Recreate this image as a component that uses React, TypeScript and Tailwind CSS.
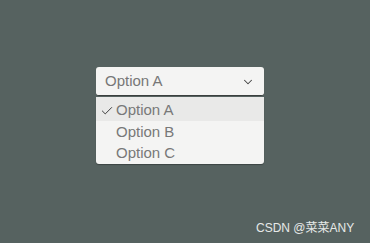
import { ChevronDown, Check } from "lucide-react";

const options = ["Option A", "Option B", "Option C"];

export default function App() {
  return (
    <div className="w-[370px] h-[243px] bg-[#566260] flex flex-col pl-[96px] pt-[67px] relative font-['Liberation_Sans',Arial,sans-serif]">
      <div className="w-[168px] flex flex-col">
        <div className="h-[29px] bg-[#f4f4f3] rounded-[3px] border-b border-[#3a3f3e] flex items-center justify-between pl-[9px] pr-[9px] pt-[1px]">
          <span className="text-[15px] text-[#777777]">Option A</span>
          <ChevronDown size={14} strokeWidth={1.8} className="text-[#444]" />
        </div>
        <div className="mt-[1px] bg-[#f4f4f3] rounded-[3px] pb-[1px] flex flex-col shadow-[0_1px_1px_rgba(0,0,0,0.3)]">
          {options.map((o, i) => (
            <div
              key={o}
              className={`flex items-center ${i === 0 ? "h-[24px] bg-[#e9e9e8] pt-[3px]" : "h-[21px] pt-[2px]"}`}
            >
              <span className="w-[20px] flex justify-center pl-[2px]">
                {i === 0 && <Check size={14} strokeWidth={1.6} className="text-[#333]" />}
              </span>
              <span className="text-[15px] text-[#787878]">{o}</span>
            </div>
          ))}
        </div>
      </div>
      <div className="absolute left-[256px] top-[219px] text-[12px] text-[#e6e9e8] font-['Liberation_Sans','Noto_Sans_CJK_SC',sans-serif]">
        CSDN @菜菜ANY
      </div>
    </div>
  );
}
